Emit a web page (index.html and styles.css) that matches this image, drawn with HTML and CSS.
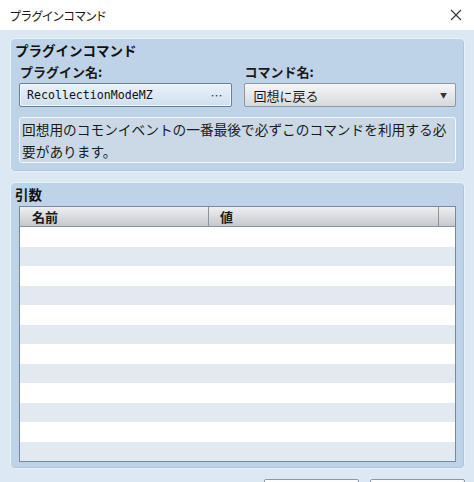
FILE: index.html
```html
<!DOCTYPE html>
<html lang="ja">
<head>
    <meta charset="UTF-8">
    <title>プラグインコマンド</title>
    <link rel="stylesheet" href="styles.css">
</head>
<body>
    <div class="dialog">
        <div class="titlebar">
            <span class="titlebar-text">プラグインコマンド</span>
            <svg class="titlebar-close" width="12" height="12" viewBox="0 0 12 12">
                <path d="M1 1 L11 11 M11 1 L1 11" stroke="#333" stroke-width="1.1" fill="none"/>
            </svg>
        </div>

        <div class="dialog-body">
            <section class="group group-command">
                <h2 class="group-title">プラグインコマンド</h2>
                <div class="fields">
                    <div class="field">
                        <label class="field-label">プラグイン名:</label>
                        <div class="input">
                            <span class="input-value">RecollectionModeMZ</span>
                            <span class="input-more">…</span>
                        </div>
                    </div>
                    <div class="field">
                        <label class="field-label">コマンド名:</label>
                        <div class="select">
                            <span class="select-value">回想に戻る</span>
                            <span class="select-arrow">▼</span>
                        </div>
                    </div>
                </div>
                <div class="description">
                    回想用のコモンイベントの一番最後で必ずこのコマンドを利用する必要があります。
                </div>
            </section>

            <section class="group group-args">
                <h2 class="group-title">引数</h2>
                <div class="args-table">
                    <div class="args-head">
                        <div class="col col-name">名前</div>
                        <div class="col col-value">値</div>
                        <div class="col col-spacer"></div>
                    </div>
                    <div class="args-rows">
                        <div class="row"></div>
                        <div class="row"></div>
                        <div class="row"></div>
                        <div class="row"></div>
                        <div class="row"></div>
                        <div class="row"></div>
                        <div class="row"></div>
                        <div class="row"></div>
                        <div class="row"></div>
                        <div class="row"></div>
                        <div class="row"></div>
                        <div class="row"></div>
                    </div>
                </div>
            </section>

            <!-- OK / キャンセル: only the top edge is in view -->
            <div class="footer">
                <button class="btn" aria-label="OK"></button>
                <button class="btn" aria-label="キャンセル"></button>
            </div>
        </div>
    </div>
</body>
</html>
```

FILE: styles.css
```css
* {
    margin: 0;
    padding: 0;
    box-sizing: border-box;
}

body {
    font-family: "Noto Sans CJK JP", "Noto Sans", sans-serif;
    color: #1a1a1a;
    background: #dce8f4;
    width: 474px;
    height: 482px;
    overflow: hidden;
}

.titlebar {
    height: 30px;
    background: #ffffff;
    display: flex;
    align-items: center;
    justify-content: space-between;
    padding: 0 12px 0 10px;
}

.titlebar-text {
    font-size: 12px;
    font-feature-settings: "palt";
    color: #1a1a1a;
}

.titlebar-close {
    display: block;
}

.dialog-body {
    padding: 8px 9px 0 10px;
}

.group {
    background: #bfd3e8;
    border: 1px solid #e9f1f9;
    border-radius: 5px;
    padding: 2px 8px 0 8px;
    box-shadow: inset -1px -1px 0 #b0c3d8;
}

.group-title {
    font-size: 13.5px;
    font-weight: 700;
    line-height: 18px;
    height: 18px;
    margin-left: -4px;
    color: #111;
}

.group-command {
    height: 134px;
}

.fields {
    display: flex;
    gap: 12px;
    margin-top: 2px;
}

.field {
    flex: 1;
    display: flex;
    flex-direction: column;
}

.field-label {
    font-size: 13px;
    font-weight: 700;
    line-height: 21px;
    height: 21px;
    padding-left: 1px;
    color: #1a1a1a;
}

.input,
.select {
    margin-top: 1px;
    height: 24px;
    display: flex;
    align-items: center;
    justify-content: space-between;
    border-radius: 2px;
}

.input {
    border: 1px solid #64809e;
    background: linear-gradient(#eaf2fb, #cfdfef);
    box-shadow: inset 0 0 0 1px #f4f8fc;
    padding: 0 8px 0 7px;
}

.input-value {
    font-family: "DejaVu Sans Mono", "Liberation Mono", monospace;
    font-size: 11.6px;
    color: #111;
}

.input-more {
    font-size: 12px;
    color: #333;
}

.select {
    border: 1px solid #8e98a4;
    background: linear-gradient(#f6f6f6, #d6d9dd);
    padding: 0 8px 0 9px;
}

.select-value {
    font-size: 13px;
    color: #1a1a1a;
}

.select-arrow {
    font-size: 7px;
    color: #333;
}

.description {
    margin-top: 10px;
    height: 46px;
    background: #cbd9e7;
    border: 1px solid #f1f6fb;
    border-radius: 3px;
    padding: 0 0 0 2px;
    font-size: 13.7px;
    line-height: 22px;
    color: #1a1a1a;
}

.group-args {
    margin-top: 10px;
    height: 287px;
}

.group-args .group-title {
    margin-bottom: 3px;
}

.args-table {
    border: 1px solid #7b8899;
    background: #ffffff;
}

.args-head {
    display: flex;
    height: 20px;
    background: linear-gradient(#efefef, #c5c9ce);
    border-bottom: 1px solid #8a939e;
}

.col {
    font-size: 13px;
    font-weight: 700;
    line-height: 19px;
    color: #1a1a1a;
}

.col-name {
    width: 189px;
    padding-left: 12px;
    border-right: 1px solid #8a939e;
}

.col-value {
    flex: 1;
    padding-left: 11px;
    border-right: 1px solid #8a939e;
}

.col-spacer {
    width: 16px;
}

.row {
    height: 19.5px;
}

.row:nth-child(even) {
    background: #e2e9f1;
}

.footer {
    display: flex;
    justify-content: flex-end;
    gap: 11px;
    margin-top: 10px;
}

.btn {
    width: 95px;
    height: 24px;
    border: 1px solid #8e98a4;
    border-radius: 2px;
    background: #fdfdfd;
}
```
